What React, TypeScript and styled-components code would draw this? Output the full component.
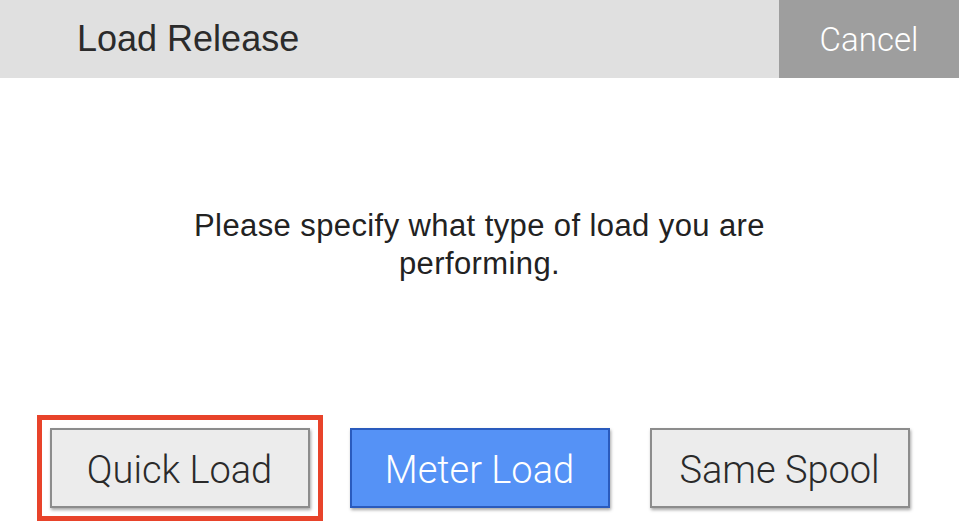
import styled, { createGlobalStyle } from 'styled-components';

const GlobalStyle = createGlobalStyle`
  html, body {
    margin: 0;
    padding: 0;
    background: #ffffff;
  }
  #root {
    height: 100vh;
  }
`;

const Screen = styled.div`
  height: 100%;
  display: flex;
  flex-direction: column;
  font-family: 'Liberation Sans', Arial, sans-serif;
`;

const Header = styled.header`
  height: 78px;
  display: flex;
  align-items: stretch;
  background-color: #e0e0e0;
`;

const Title = styled.h1`
  flex: 1;
  margin: 0;
  padding-left: 77px;
  display: flex;
  align-items: center;
  font-size: 36px;
  font-weight: 400;
  color: #2b2b2b;
`;

const CancelButton = styled.button`
  width: 180px;
  border: 0;
  background-color: #9e9e9e;
  color: #ffffff;
  font-family: Roboto, 'Liberation Sans', sans-serif;
  font-size: 33px;
  font-weight: 300;
  cursor: pointer;
`;

const Body = styled.main`
  flex: 1;
  display: flex;
  flex-direction: column;
  justify-content: space-between;
`;

const Message = styled.p`
  margin: 0;
  padding: 129px 170px 0;
  text-align: center;
  font-size: 31px;
  line-height: 38px;
  letter-spacing: 0.4px;
  color: #222222;
`;

const Actions = styled.div`
  display: flex;
  justify-content: center;
  gap: 40px;
  padding-bottom: 20px;
`;

interface ChoiceProps {
  $primary?: boolean;
  $selected?: boolean;
}

const Choice = styled.button<ChoiceProps>`
  width: 260px;
  height: 80px;
  box-sizing: border-box;
  padding: 3px 0 0;
  border: 2px solid ${(p) => (p.$primary ? '#2a5bbd' : '#8c8c8c')};
  border-radius: 0;
  background-color: ${(p) => (p.$primary ? '#5592f6' : '#ececec')};
  color: ${(p) => (p.$primary ? '#ffffff' : '#2a2a2a')};
  box-shadow: 1px 2px 3px rgba(0, 0, 0, 0.35);
  font-family: Roboto, 'Liberation Sans', sans-serif;
  font-size: 38px;
  font-weight: 300;
  cursor: pointer;
  outline: ${(p) => (p.$selected ? '5px solid #e8432a' : 'none')};
  outline-offset: 8px;
`;

export default function App() {
  return (
    <>
      <GlobalStyle />
      <Screen>
        <Header>
          <Title>Load Release</Title>
          <CancelButton>Cancel</CancelButton>
        </Header>
        <Body>
          <Message>Please specify what type of load you are performing.</Message>
          <Actions>
            <Choice $selected>Quick Load</Choice>
            <Choice $primary>Meter Load</Choice>
            <Choice>Same Spool</Choice>
          </Actions>
        </Body>
      </Screen>
    </>
  );
}
